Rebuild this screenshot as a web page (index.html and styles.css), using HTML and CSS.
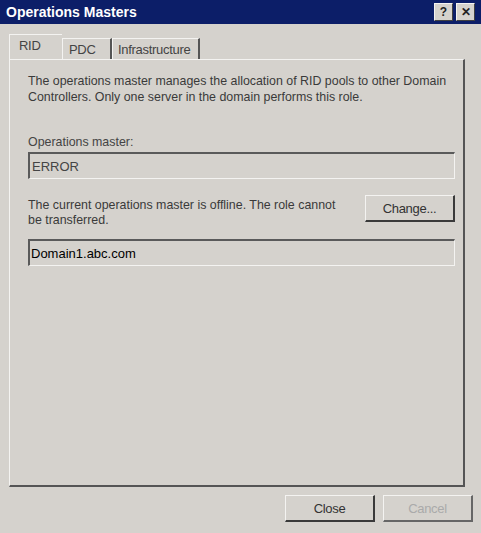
FILE: index.html
```html
<!DOCTYPE html>
<html lang="en">
<head>
    <meta charset="UTF-8">
    <title>Operations Masters</title>
    <link rel="stylesheet" href="styles.css">
</head>
<body>
    <div class="dialog">
        <div class="title-bar">
            <span class="title">Operations Masters</span>
            <div class="title-buttons">
                <span class="tb-btn">?</span>
                <span class="tb-btn">&#x2715;</span>
            </div>
        </div>

        <div class="tabs">
            <div class="tab active">RID</div>
            <div class="tab pdc">PDC</div>
            <div class="tab infra">Infrastructure</div>
        </div>

        <div class="panel">
            <p class="intro">The operations master manages the allocation of RID pools to other Domain Controllers. Only one server in the domain performs this role.</p>

            <label class="field-label">Operations master:</label>
            <div class="field readonly">ERROR</div>

            <div class="status-row">
                <p class="status">The current operations master is offline. The role cannot be transferred.</p>
                <button class="btn change">Change...</button>
            </div>

            <div class="field target">Domain1.abc.com</div>
        </div>

        <div class="footer">
            <button class="btn">Close</button>
            <button class="btn disabled">Cancel</button>
        </div>
    </div>
</body>
</html>
```

FILE: styles.css
```css
body {
    margin: 0;
    background: #d5d2cd;
    font-family: 'Liberation Sans', Arial, sans-serif;
    font-size: 12px;
    color: #333;
}
.dialog {
    width: 481px;
    height: 533px;
    display: flex;
    flex-direction: column;
}
.title-bar {
    height: 24px;
    background: #0c1e68;
    display: flex;
    align-items: center;
    justify-content: space-between;
    padding: 0 6px 0 6px;
    box-sizing: border-box;
}
.title {
    color: #fff;
    font-weight: bold;
    font-size: 14px;
}
.title-buttons {
    display: flex;
    gap: 3px;
}
.tb-btn {
    width: 17px;
    height: 16px;
    background: #d5d2cd;
    border: 1px solid;
    border-color: #f4f3f1 #404040 #404040 #f4f3f1;
    display: flex;
    align-items: center;
    justify-content: center;
    font-weight: bold;
    font-size: 12px;
    color: #222;
}
.tabs {
    display: flex;
    align-items: flex-end;
    margin: 10px 0 0 9px;
    height: 25px;
}
.tab {
    border: 1px solid #f4f3f1;
    border-bottom: none;
    border-right: 2px solid #555;
    height: 21px;
    box-sizing: border-box;
    display: flex;
    align-items: center;
    font-size: 13px;
    color: #444;
    letter-spacing: -0.3px;
}
.tab.active {
    height: 25px;
    width: 53px;
    padding: 3px 0 0 9px;
    border-right: none;
    align-items: flex-start;
}
.pdc {
    width: 50px;
    padding-left: 6px;
}
.infra {
    width: 88px;
    padding-left: 5px;
}
.panel {
    margin: 0 16px 0 9px;
    height: 428px;
    box-sizing: border-box;
    border-left: 1px solid #f4f3f1;
    border-top: 1px solid #f4f3f1;
    border-right: 2px solid #555;
    border-bottom: 2px solid #555;
    padding: 13px 8px 0 18px;
}
.intro {
    margin: 0;
    line-height: 16px;
    font-size: 12.4px;
    color: #3a3a3a;
}
.field-label {
    display: block;
    margin-top: 30px;
    font-size: 12.4px;
    color: #444;
}
.field {
    height: 27px;
    margin-top: 3px;
    box-sizing: border-box;
    border: 1px solid;
    border-color: #5a5a5a #f4f3f1 #f4f3f1 #5a5a5a;
    border-top-width: 2px;
    border-left-width: 2px;
    display: flex;
    align-items: center;
    padding-left: 2px;
    font-size: 13px;
}
.readonly {
    color: #444;
}
.status-row {
    display: flex;
    justify-content: space-between;
    align-items: flex-start;
    margin-top: 16px;
}
.status {
    margin: 3px 0 0 0;
    width: 316px;
    line-height: 15px;
    font-size: 12.4px;
    color: #3a3a3a;
}
.btn {
    width: 90px;
    height: 27px;
    background: #d5d2cd;
    border: 1px solid;
    border-color: #f4f3f1 #3a3a3a #3a3a3a #f4f3f1;
    border-right-width: 2px;
    border-bottom-width: 2px;
    font-family: 'Liberation Sans', Arial, sans-serif;
    font-size: 13px;
    color: #333;
    letter-spacing: -0.3px;
    padding: 0;
}
.target {
    margin-top: 11px;
    color: #000;
    padding-left: 1px;
}
.footer {
    display: flex;
    justify-content: flex-end;
    gap: 8px;
    margin: 8px 8px 0 0;
}
.disabled {
    color: #aaa;
    border-color: #f4f3f1 #666 #666 #f4f3f1;
}
```
